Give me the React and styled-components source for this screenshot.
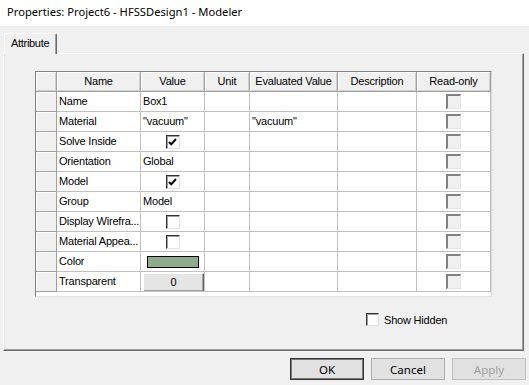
import React from 'react'
import styled, { createGlobalStyle } from 'styled-components'

const GlobalStyle = createGlobalStyle`
	html, body {
		margin: 0;
		padding: 0;
		background: #f0f0f0;
	}
	body {
		font-family: 'Liberation Sans', Arial, sans-serif;
		font-size: 11px;
		color: #000;
	}
`

const columns = [
	{ key: 'name', label: 'Name', width: 84 },
	{ key: 'value', label: 'Value', width: 64 },
	{ key: 'unit', label: 'Unit', width: 45 },
	{ key: 'evaluated', label: 'Evaluated Value', width: 88 },
	{ key: 'description', label: 'Description', width: 79 },
	{ key: 'readonly', label: 'Read-only', width: 74 },
]

const rows = [
	{ name: 'Name', value: { text: 'Box1' } },
	{ name: 'Material', value: { text: '"vacuum"' }, evaluated: '"vacuum"' },
	{ name: 'Solve Inside', value: { check: true } },
	{ name: 'Orientation', value: { text: 'Global' } },
	{ name: 'Model', value: { check: true } },
	{ name: 'Group', value: { text: 'Model' } },
	{ name: 'Display Wirefra...', value: { check: false } },
	{ name: 'Material Appea...', value: { check: false } },
	{ name: 'Color', value: { color: '#8dac8a' } },
	{ name: 'Transparent', value: { button: '0' } },
]

const Check = ({ checked, readOnly, size }) => (
	<CheckBox $readOnly={readOnly} $size={size}>
		{checked && (
			<svg width="9" height="8" viewBox="0 0 9 8">
				<path d="M1 4 L3.2 6.3 L8 1" stroke="#000" strokeWidth="2" fill="none" />
			</svg>
		)}
	</CheckBox>
)

const ValueCell = ({ value }) => {
	if (value.text) return <Cell>{value.text}</Cell>
	if (value.color)
		return (
			<Cell $center>
				<Swatch $color={value.color} />
			</Cell>
		)
	if (value.button)
		return (
			<Cell $flush>
				<CellButton>{value.button}</CellButton>
			</Cell>
		)
	return (
		<Cell $center>
			<Check checked={value.check} />
		</Cell>
	)
}

const App = () => {
	return (
		<Window>
			<GlobalStyle />
			<TitleBar>Properties: Project6 - HFSSDesign1 - Modeler</TitleBar>
			<Body>
				<TabStrip>
					<Tab>Attribute</Tab>
				</TabStrip>
				<Panel>
					<Grid $cols={columns.map((c) => c.width + 'px').join(' ')}>
						<HeaderCell />
						{columns.map((c) => (
							<HeaderCell key={c.key}>{c.label}</HeaderCell>
						))}
						{rows.map((r) => (
							<React.Fragment key={r.name}>
								<RowHead />
								<Cell>{r.name}</Cell>
								<ValueCell value={r.value} />
								<Cell />
								<Cell>{r.evaluated}</Cell>
								<Cell />
								<Cell $center>
									<Check readOnly size={15} />
								</Cell>
							</React.Fragment>
						))}
					</Grid>
					<ShowHiddenRow>
						<Check size={13} />
						<span>Show Hidden</span>
					</ShowHiddenRow>
				</Panel>
				<ButtonRow>
					<DialogButton $default>OK</DialogButton>
					<DialogButton>Cancel</DialogButton>
					<DialogButton disabled>Apply</DialogButton>
				</ButtonRow>
			</Body>
		</Window>
	)
}

const Window = styled.div`
	width: 529px;
	height: 385px;
	display: flex;
	flex-direction: column;
	overflow: hidden;
	background: #f0f0f0;
`

const TitleBar = styled.div`
	height: 26px;
	flex: none;
	background: #fff;
	padding-left: 7px;
	font-family: 'Noto Sans', 'Open Sans', sans-serif;
	font-size: 11.2px;
	line-height: 24px;
	color: #000;
`

const Body = styled.div`
	flex: 1;
	display: flex;
	flex-direction: column;
	padding: 7px 4px 0 3px;
`

const TabStrip = styled.div`
	display: flex;
	height: 20px;
	padding-left: 1px;
	position: relative;
	z-index: 1;
`

const Tab = styled.div`
	height: 21px;
	width: 53px;
	box-sizing: border-box;
	padding-left: 6px;
	background: #f0f0f0;
	border-top: 1px solid #fff;
	border-left: 1px solid #fff;
	border-right: 1px solid #696969;
	box-shadow: inset -1px 0 #a0a0a0;
	border-radius: 2px 2px 0 0;
	font-size: 11px;
	line-height: 19px;
	letter-spacing: -0.3px;
`

const Panel = styled.div`
	width: 521px;
	height: 298px;
	box-sizing: border-box;
	border-top: 1px solid #fff;
	border-left: 1px solid #fff;
	border-right: 1px solid #696969;
	border-bottom: 1px solid #696969;
	box-shadow: inset -1px -1px #a0a0a0, inset 1px 0 #e3e3e3;
	padding: 17px 0 0 31px;
	display: flex;
	flex-direction: column;
`

const Grid = styled.div`
	display: grid;
	grid-template-columns: 21px ${(p) => p.$cols};
	grid-auto-rows: 20px;
	align-content: start;
	width: 457px;
	height: 226px;
	box-sizing: border-box;
	background: #fff;
	border-top: 1px solid #808080;
	border-left: 1px solid #808080;
	border-right: 1px solid #d8d8d8;
	border-bottom: 1px solid #e3e3e3;
`

const HeaderCell = styled.div`
	box-sizing: border-box;
	background: #f0f0f0;
	border-right: 1px solid #a0a0a0;
	border-bottom: 1px solid #a0a0a0;
	box-shadow: inset 1px 1px #fff, inset -1px -1px #d0d0d0;
	text-align: center;
	line-height: 18px;
	letter-spacing: -0.2px;
	white-space: nowrap;
	overflow: hidden;
`

const RowHead = styled.div`
	box-sizing: border-box;
	background: #f0f0f0;
	border-right: 1px solid #a0a0a0;
	border-bottom: 1px solid #a0a0a0;
	box-shadow: inset 1px 1px #fff;
`

const Cell = styled.div`
	box-sizing: border-box;
	border-right: 1px solid #c0c0c0;
	border-bottom: 1px solid #c0c0c0;
	padding: ${(p) => (p.$flush ? '0' : '0 2px')};
	line-height: 19px;
	letter-spacing: -0.2px;
	white-space: nowrap;
	overflow: hidden;
	display: ${(p) => (p.$center || p.$flush ? 'flex' : 'block')};
	align-items: center;
	justify-content: center;
`

const CheckBox = styled.span`
	width: ${(p) => p.$size || 14}px;
	height: ${(p) => p.$size || 14}px;
	box-sizing: border-box;
	flex: none;
	display: inline-flex;
	align-items: center;
	justify-content: center;
	background: ${(p) => (p.$readOnly ? '#f0f0f0' : '#fff')};
	border-style: solid;
	border-width: ${(p) => (p.$readOnly ? '2px 1px 1px 2px' : '1px')};
	border-color: ${(p) =>
		p.$readOnly ? '#808080 #e3e3e3 #e3e3e3 #808080' : '#333 #e3e3e3 #e3e3e3 #333'};
	box-shadow: ${(p) => (p.$readOnly ? 'none' : 'inset 1px 1px #a0a0a0')};
`

const Swatch = styled.span`
	width: 52px;
	height: 12px;
	box-sizing: border-box;
	border: 1px solid #000;
	background: ${(p) => p.$color};
`

const CellButton = styled.div`
	width: 100%;
	height: 100%;
	box-sizing: border-box;
	margin: 1px 0 0 2px;
	background: #e5e5e5;
	border-top: 1px solid #fff;
	border-left: 1px solid #fff;
	border-right: 1px solid #696969;
	border-bottom: 1px solid #696969;
	box-shadow: inset -1px -1px #a0a0a0;
	text-align: center;
	line-height: 17px;
`

const ShowHiddenRow = styled.div`
	display: flex;
	align-items: center;
	gap: 5px;
	margin: 16px 0 0 331px;
	letter-spacing: -0.2px;
`

const ButtonRow = styled.div`
	display: flex;
	justify-content: flex-end;
	gap: 7px;
	margin-top: 7px;
	margin-right: -1px;
`

const DialogButton = styled.button`
	width: 74px;
	height: 22px;
	box-sizing: border-box;
	padding: 0;
	font-family: 'Noto Sans', 'Open Sans', sans-serif;
	font-size: 11.5px;
	color: ${(p) => (p.disabled ? '#a0a0a0' : '#000')};
	background: #e1e1e1;
	border: 1px solid ${(p) => (p.$default ? '#333' : p.disabled ? '#bfbfbf' : '#adadad')};
	box-shadow: ${(p) => (p.$default ? 'inset 0 0 0 1px #7a7a7a' : 'none')};
	border-radius: 0;
`

export default App
